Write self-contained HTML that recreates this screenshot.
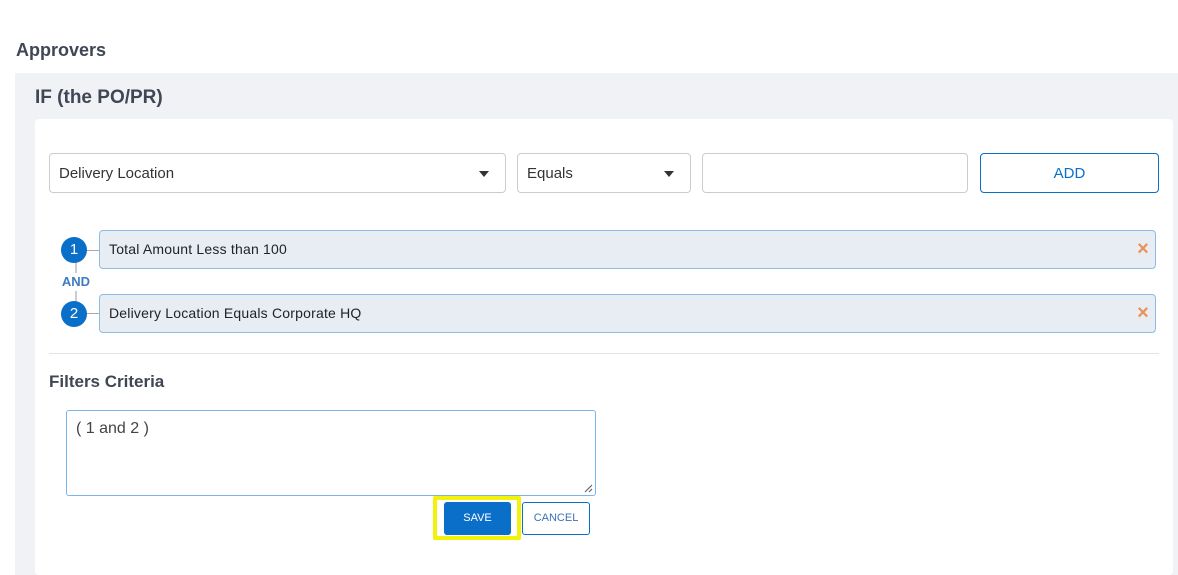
<!DOCTYPE html>
<html><head><meta charset="utf-8"><style>
*{box-sizing:border-box;margin:0;padding:0}
body{width:1178px;height:575px;background:#fff;font-family:"Liberation Sans",sans-serif;position:relative;overflow:hidden;color:#212529}
.a{position:absolute}
.h{font-weight:bold;color:#3f4654}
.sel{border:1px solid #ccc;border-radius:4px;background:#fff;font-size:15px;color:#333;padding-left:9px;line-height:40px}
.tri{position:absolute;right:16px;top:17px;width:0;height:0;border-left:5px solid transparent;border-right:5px solid transparent;border-top:6px solid #333}
.chip{background:#e8edf4;border:1px solid #8bbce8;border-radius:4px;font-size:14px;color:#222;padding-left:9px;line-height:37px;letter-spacing:0.2px}
.x{position:absolute;right:6px;top:0;color:#e8925a;font-weight:bold;font-size:20px}
.c{width:26px;height:26px;border-radius:50%;background:#0a6fc9;color:#fff;text-align:center;line-height:26px;font-size:15px}
</style></head><body>
<div class="a h" style="left:16px;top:40px;font-size:18px">Approvers</div>
<div class="a" style="left:15px;top:73px;width:1163px;height:502px;background:#f1f2f6"></div>
<div class="a h" style="left:35px;top:87px;font-size:19px">IF (the PO/PR)</div>
<div class="a" style="left:35px;top:119px;width:1138px;height:456px;background:#fff;border-radius:4px"></div>
<div class="a sel" style="left:49px;top:153px;width:457px;height:40px">Delivery Location<span class="tri"></span></div>
<div class="a sel" style="left:517px;top:153px;width:174px;height:40px">Equals<span class="tri"></span></div>
<div class="a sel" style="left:702px;top:153px;width:266px;height:40px"></div>
<div class="a" style="left:980px;top:153px;width:179px;height:40px;border:1px solid #0a6fc9;border-radius:4px;color:#0a6fc9;text-align:center;line-height:39px;font-size:15px">ADD</div>
<div class="a" style="left:75px;top:250px;width:2px;height:63px;background:#ccc"></div>
<div class="a" style="left:86px;top:250px;width:14px;height:1px;background:#aaa"></div>
<div class="a" style="left:86px;top:313px;width:14px;height:1px;background:#aaa"></div>
<div class="a c" style="left:61px;top:237px">1</div>
<div class="a" style="left:59px;top:273px;width:34px;height:18px;background:#fff;color:#3f7bc0;font-size:13px;font-weight:bold;text-align:center;line-height:18px">AND</div>
<div class="a c" style="left:61px;top:301px">2</div>
<div class="a chip" style="left:99px;top:230px;width:1057px;height:39px">Total Amount Less than 100<span class="x">×</span></div>
<div class="a chip" style="left:99px;top:294px;width:1057px;height:39px">Delivery Location Equals Corporate HQ<span class="x">×</span></div>
<div class="a" style="left:49px;top:353px;width:1110px;height:1px;background:#e2e4ea"></div>
<div class="a h" style="left:49px;top:372px;font-size:17px">Filters Criteria</div>
<div class="a" style="left:66px;top:410px;width:530px;height:86px;border:1px solid #7ab4ec;border-radius:3px;font-size:16px;color:#444;padding:9px 9px">( 1 and 2 )
<svg class="a" style="right:2px;bottom:2px" width="9" height="9"><path d="M8 1L1 8M8 5L5 8" stroke="#666" stroke-width="1.2"/></svg></div>
<div class="a" style="left:433px;top:496px;width:88px;height:44px;border:4px solid #f2f20a;border-radius:2px"></div>
<div class="a" style="left:444px;top:502px;width:67px;height:33px;background:#0a6fc9;border-radius:3px;color:#fff;font-size:11px;text-align:center;line-height:33px">SAVE</div>
<div class="a" style="left:522px;top:502px;width:68px;height:33px;border:1px solid #0a6fc9;border-radius:3px;color:#3f6fb5;font-size:11px;text-align:center;line-height:31px">CANCEL</div>
</body></html>
